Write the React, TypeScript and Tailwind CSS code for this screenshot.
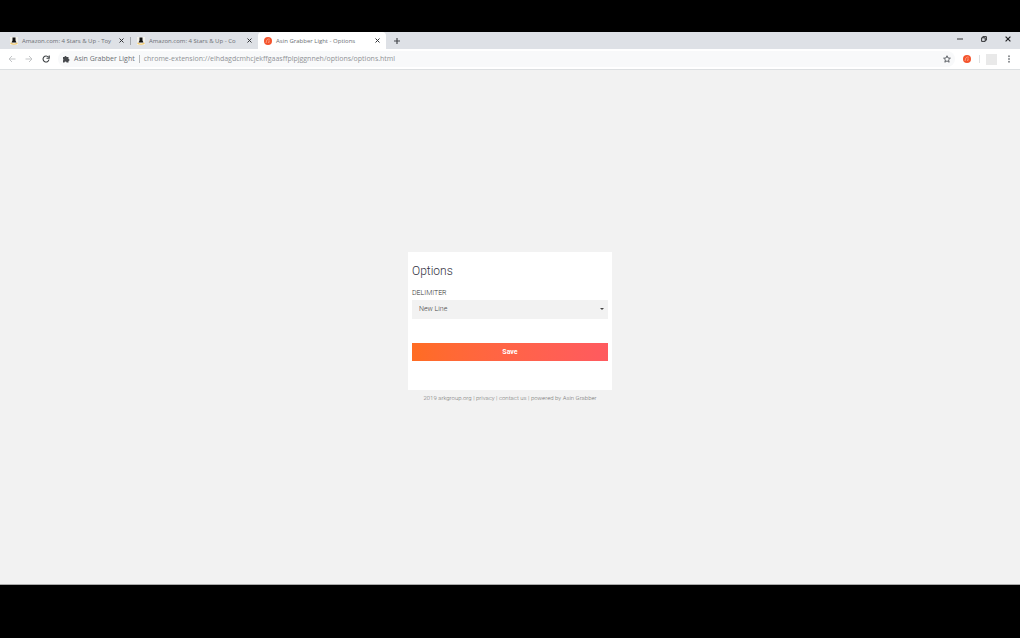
import React from "react";

const tabs = [
  { title: "Amazon.com: 4 Stars & Up - Toy", icon: "amazon", active: false },
  { title: "Amazon.com: 4 Stars & Up - Co", icon: "amazon", active: false },
  { title: "Asin Grabber Light - Options", icon: "asin", active: true },
];

function AmazonIcon() {
  return (
    <svg viewBox="0 0 16 16" className="size-2 shrink-0" aria-hidden="true">
      <path d="M0 0h16v16H0z" fill="#f3f1ea" />
      <path d="M5 1h6v6l2 4H3l2-4z" fill="#111" />
      <path d="M1 11c4 3 10 3 14 0v3c-4 2-10 2-14 0z" fill="#f3c766" />
    </svg>
  );
}

function AsinIcon() {
  return (
    <svg viewBox="0 0 16 16" className="size-2 shrink-0" aria-hidden="true">
      <circle cx="8" cy="8" r="8" fill="#f4532c" />
      <path d="M11.500 4.500C8 3 5 5 5 8.500L4 12M8.500 8h3M8 11l3-1" fill="none" stroke="#ffb49c" strokeWidth="1.500" />
    </svg>
  );
}

function CloseIcon({ className }: { className: string }) {
  return (
    <svg viewBox="0 0 10 10" className={className} fill="none" stroke="currentColor" strokeWidth="2" aria-hidden="true">
      <path d="M1 1l8 8M9 1L1 9" />
    </svg>
  );
}

function TabStrip() {
  return (
    <header className="flex h-[17px] items-stretch bg-[#dee1e6] pl-1 text-[#6b6f74]">
      <div className="flex min-w-0 flex-1">
        {tabs.map((tab, i) => (
          <div
            key={tab.title}
            className={
              tab.active
                ? "flex w-32 items-center gap-1 rounded-t bg-white px-1.5"
                : "flex w-[127px] items-center py-1"
            }
          >
            <div
              className={
                tab.active
                  ? "contents"
                  : i === 0
                    ? "flex w-full items-center gap-1 border-r border-[#a5a8ad] px-1.5"
                    : "flex w-full items-center gap-1 px-1.5"
              }
            >
              {tab.icon === "amazon" ? <AmazonIcon /> : <AsinIcon />}
              <span className="min-w-0 flex-1 text-[6px] leading-[8px] whitespace-nowrap">{tab.title}</span>
              <button type="button" aria-label="Close tab" className="flex text-[#303236]">
                <CloseIcon className="size-[5px]" />
              </button>
            </div>
          </div>
        ))}
        <button type="button" aria-label="New tab" className="ml-2 flex items-center text-[#45484c]">
          <svg viewBox="0 0 10 10" className="size-1.5" stroke="currentColor" strokeWidth="2" aria-hidden="true">
            <path d="M5 0v10M0 5h10" />
          </svg>
        </button>
      </div>
      <div className="flex items-center gap-[18px] pr-[9px] pb-1 text-[#202124]">
        <button type="button" aria-label="Minimize">
          <svg viewBox="0 0 10 10" className="size-1.5" stroke="currentColor" strokeWidth="1.500" aria-hidden="true"><path d="M0 5h10" /></svg>
        </button>
        <button type="button" aria-label="Restore">
          <svg viewBox="0 0 10 10" className="size-1.5" fill="none" stroke="currentColor" strokeWidth="1.500" aria-hidden="true"><path d="M1 3h6v6H1zM3 3V1h6v6H7" /></svg>
        </button>
        <button type="button" aria-label="Close">
          <CloseIcon className="size-1.5" />
        </button>
      </div>
    </header>
  );
}

function Toolbar() {
  return (
    <div className="flex h-[21px] items-center border-b border-[#dcdfe1] bg-white px-2 text-[#6b6f74]">
      <div className="flex items-center gap-[9px]">
        <button type="button" aria-label="Back" className="text-[#c3c5c7]">
          <svg viewBox="0 0 16 16" className="size-2" fill="none" stroke="currentColor" strokeWidth="2" aria-hidden="true"><path d="M15 8H2M8 2L2 8l6 6" /></svg>
        </button>
        <button type="button" aria-label="Forward" className="text-[#c3c5c7]">
          <svg viewBox="0 0 16 16" className="size-2" fill="none" stroke="currentColor" strokeWidth="2" aria-hidden="true"><path d="M1 8h13M8 2l6 6-6 6" /></svg>
        </button>
        <button type="button" aria-label="Reload" className="text-[#3c4043]">
          <svg viewBox="0 0 16 16" className="size-2" fill="none" stroke="currentColor" strokeWidth="2.200" aria-hidden="true"><path d="M13 4.500A6 6 0 1 0 14 9M14.500 1v5.500H9" /></svg>
        </button>
      </div>
      <div className="ml-2 flex h-4 min-w-0 flex-1 items-center rounded-full bg-[#f8f9fa] px-1 text-[7px] leading-[10px]">
        <svg viewBox="0 0 16 16" className="size-2 shrink-0" aria-hidden="true">
          <path d="M2 4h3a2 2 0 0 1 4 0h4v4a2 2 0 0 1 0 4v3H9a2 2 0 0 0-4 0H2v-4a2 2 0 0 0 0-3z" fill="#45484c" />
        </svg>
        <span className="ml-1 whitespace-nowrap">Asin Grabber Light</span>
        <span className="mx-1 h-2 border-l border-[#b6b9bc]" />
        <span className="flex-1 whitespace-nowrap text-[#909397]">
          chrome-extension://eihdagdcmhcjekffgaasffplpjggnneh/options/options.html
        </span>
        <button type="button" aria-label="Bookmark this page">
          <svg viewBox="0 0 16 16" className="size-2" fill="none" stroke="#5f6368" strokeWidth="2" aria-hidden="true"><path d="M8 1.500l2 4.500 4.800.4-3.700 3.200 1.200 4.800L8 11.800l-4.300 2.600 1.200-4.800L1.200 6.400 6 6z" /></svg>
        </button>
      </div>
      <div className="ml-2 flex items-center">
        <button type="button" aria-label="Asin Grabber Light"><AsinIcon /></button>
        <span className="ml-2 h-2 border-l border-[#dfe1e3]" />
        <button type="button" aria-label="Profile" className="ml-1.5 size-[11px] bg-[#e9e9e9]" />
        <button type="button" aria-label="Menu" className="ml-2.5 mr-px">
          <svg viewBox="0 0 8 16" className="h-2 w-1" fill="#85888c" aria-hidden="true"><circle cx="4" cy="2.500" r="2" /><circle cx="4" cy="8" r="2" /><circle cx="4" cy="13.500" r="2" /></svg>
        </button>
      </div>
    </div>
  );
}

function OptionsForm() {
  return (
    <form className="w-1/5 bg-white px-1 pt-3 pb-[29px]" onSubmit={(e) => e.preventDefault()}>
      <h1 className="text-[12px] leading-[14px] font-light text-[#33333f]">Options</h1>
      <label htmlFor="delimiter" className="mt-2.5 block text-[7px] leading-[10px] font-light text-[#333]">DELIMITER</label>
      <div className="relative mt-0.5">
        <select id="delimiter" className="block h-[19px] w-full appearance-none bg-[#f2f2f2] pl-[7px] text-[7px] font-light text-[#444]">
          <option>New Line</option>
          <option>Comma</option>
        </select>
        <svg viewBox="0 0 8 4" className="pointer-events-none absolute top-2 right-1 h-0.5 w-1" aria-hidden="true"><path d="M0 0h8L4 4z" fill="#444" /></svg>
      </div>
      <button type="submit" className="mt-6 block h-[18px] w-full bg-linear-to-r from-[#ff6c22] to-[#ff5a5f] text-[7px] leading-[10px] font-bold text-white">Save</button>
    </form>
  );
}

export default function App() {
  return (
    <div className="flex min-h-screen flex-col bg-black pt-8 pb-[53px] font-['Open_Sans',sans-serif]">
      <TabStrip />
      <Toolbar />
      <main className="flex flex-1 flex-col items-center justify-center border-b border-[#aaa] bg-[#f2f2f2] font-['Roboto',sans-serif]">
        <OptionsForm />
        <footer className="mt-1 text-[6px] leading-[8px] font-light text-[#777]">
          2019 <a href="#site">arkgroup.org</a> | <a href="#privacy">privacy</a> | <a href="#contact">contact us</a> | powered by <a href="#asin">Asin Grabber</a>
        </footer>
      </main>
    </div>
  );
}
